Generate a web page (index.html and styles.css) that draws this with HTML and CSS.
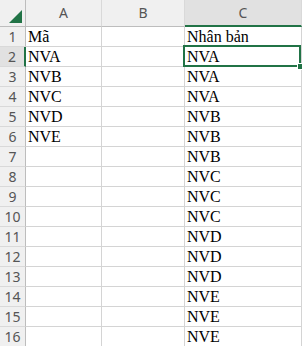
FILE: index.html
```html
<!DOCTYPE html>
<html>
<head>
	<title>Sheet</title>
	<meta charset="UTF-8">
	<link rel="stylesheet" href="styles.css">
</head>
<body>
	<div class="sheet">
		<div class="corner">
			<svg width="13" height="13" viewBox="0 0 13 13"><polygon points="13,0 13,13 0,13" fill="#217346"/></svg>
		</div>
		<div class="colhead">A</div>
		<div class="colhead">B</div>
		<div class="colhead active">C</div>

		<div class="rowhead">1</div><div class="cell">Mã</div><div class="cell"></div><div class="cell">Nhân bản</div>
		<div class="rowhead active">2</div><div class="cell">NVA</div><div class="cell"></div><div class="cell selected">NVA</div>
		<div class="rowhead">3</div><div class="cell">NVB</div><div class="cell"></div><div class="cell">NVA</div>
		<div class="rowhead">4</div><div class="cell">NVC</div><div class="cell"></div><div class="cell">NVA</div>
		<div class="rowhead">5</div><div class="cell">NVD</div><div class="cell"></div><div class="cell">NVB</div>
		<div class="rowhead">6</div><div class="cell">NVE</div><div class="cell"></div><div class="cell">NVB</div>
		<div class="rowhead">7</div><div class="cell"></div><div class="cell"></div><div class="cell">NVB</div>
		<div class="rowhead">8</div><div class="cell"></div><div class="cell"></div><div class="cell">NVC</div>
		<div class="rowhead">9</div><div class="cell"></div><div class="cell"></div><div class="cell">NVC</div>
		<div class="rowhead">10</div><div class="cell"></div><div class="cell"></div><div class="cell">NVC</div>
		<div class="rowhead">11</div><div class="cell"></div><div class="cell"></div><div class="cell">NVD</div>
		<div class="rowhead">12</div><div class="cell"></div><div class="cell"></div><div class="cell">NVD</div>
		<div class="rowhead">13</div><div class="cell"></div><div class="cell"></div><div class="cell">NVD</div>
		<div class="rowhead">14</div><div class="cell"></div><div class="cell"></div><div class="cell">NVE</div>
		<div class="rowhead">15</div><div class="cell"></div><div class="cell"></div><div class="cell">NVE</div>
		<div class="rowhead">16</div><div class="cell"></div><div class="cell"></div><div class="cell">NVE</div>
	</div>
</body>
</html>
```

FILE: styles.css
```css
body {
	margin: 0;
	background-color: #ffffff;
	overflow: hidden;
}

.sheet {
	display: grid;
	grid-template-columns: 26px 76px 83px 117px;
	grid-template-rows: 27px;
	grid-auto-rows: 20px;
}

.sheet > div {
	box-sizing: border-box;
}

.corner {
	background-color: #f0f0f0;
	border-right: 1px solid #bdbdbd;
	border-bottom: 1px solid #bdbdbd;
	display: flex;
	align-items: flex-end;
	justify-content: flex-end;
	padding: 0 3px 3px 0;
}

.colhead {
	background-color: #f0f0f0;
	border-right: 1px solid #d9d9d9;
	border-bottom: 1px solid #bdbdbd;
	color: #555555;
	font-family: "Noto Sans", sans-serif;
	font-size: 14px;
	text-align: center;
	line-height: 26px;
}

.rowhead {
	background-color: #f0f0f0;
	border-right: 1px solid #bdbdbd;
	border-bottom: 1px solid #d9d9d9;
	color: #555555;
	font-family: "Noto Sans", sans-serif;
	font-size: 14px;
	text-align: center;
	line-height: 20px;
}

.colhead.active {
	background-color: #e1e1e1;
	border-bottom: 2px solid #217346;
	line-height: 25px;
}

.rowhead.active {
	background-color: #e1e1e1;
	border-right: 2px solid #217346;
}

.cell {
	border-right: 1px solid #d4d4d4;
	border-bottom: 1px solid #d4d4d4;
	font-family: "Liberation Serif", "Times New Roman", serif;
	font-size: 16px;
	line-height: 19px;
	padding-left: 2px;
	color: #000000;
	white-space: nowrap;
	position: relative;
}

.cell.selected::after {
	content: "";
	position: absolute;
	left: -2px;
	top: -2px;
	right: 0;
	bottom: -1px;
	border: 2px solid #217346;
}

.cell.selected::before {
	content: "";
	position: absolute;
	right: -3px;
	bottom: -4px;
	width: 5px;
	height: 5px;
	background-color: #217346;
	border: 1px solid #ffffff;
	z-index: 1;
}
```
